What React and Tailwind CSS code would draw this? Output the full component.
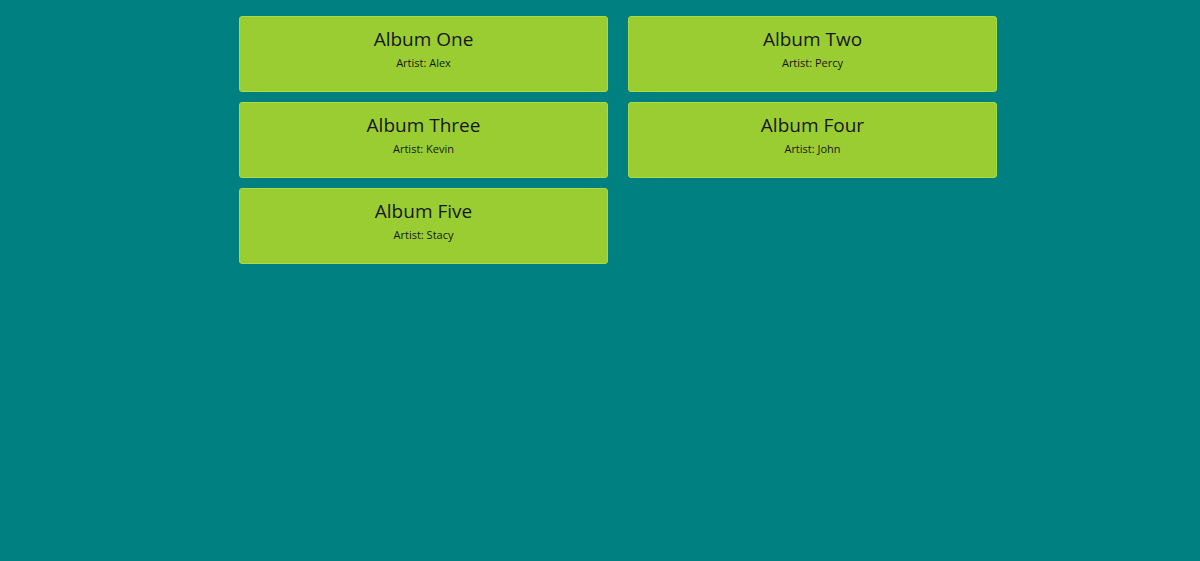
import React from 'react';

const albums = [
  { title: 'Album One', artist: 'Alex' },
  { title: 'Album Two', artist: 'Percy' },
  { title: 'Album Three', artist: 'Kevin' },
  { title: 'Album Four', artist: 'John' },
  { title: 'Album Five', artist: 'Stacy' },
];

export default function App() {
  return (
    <div
      className="min-h-screen bg-[#008080] pt-4"
      style={{ fontFamily: '"Open Sans", "Noto Sans", sans-serif' }}
    >
      <div className="ml-[239px] grid w-[758px] grid-cols-2 gap-x-5 gap-y-[10px]">
        {albums.map((album) => (
          <div
            key={album.title}
            className="h-[76px] rounded-[3px] border border-[#a9d943] bg-[#9acd32] pt-[9px] text-center text-[#16161e]"
          >
            <h2 className="text-[19px] leading-[26px]">{album.title}</h2>
            <p className="mt-[3px] text-[11px] leading-[16px]">Artist: {album.artist}</p>
          </div>
        ))}
      </div>
    </div>
  );
}
